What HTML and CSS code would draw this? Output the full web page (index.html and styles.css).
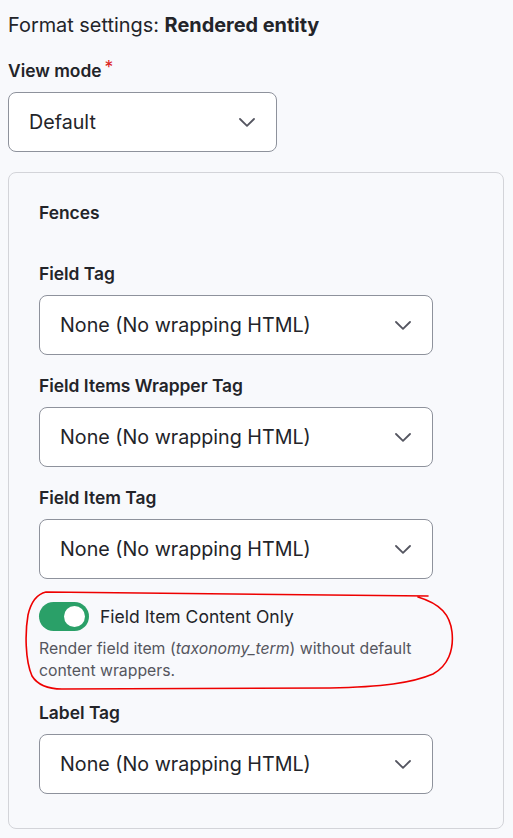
FILE: index.html
```html
<!DOCTYPE html>
<html lang="en">
<head>
<meta charset="utf-8">
<title>Format settings</title>
<link rel="stylesheet" href="styles.css">
</head>
<body>
<div class="page">
  <div class="title">Format settings: <strong>Rendered entity</strong></div>

  <div class="field field-top">
    <label class="label">View mode<span class="req">*</span></label>
    <div class="select select-short">
      <span>Default</span>
      <svg class="chev" width="16" height="9" viewBox="0 0 16 9"><path d="M1 1 L8 7.8 L15 1" fill="none" stroke="#545560" stroke-width="1.8" stroke-linecap="round" stroke-linejoin="round"/></svg>
    </div>
  </div>

  <div class="fieldset">
    <div class="legend">Fences</div>

    <div class="field">
      <label class="label">Field Tag</label>
      <div class="select">
        <span>None (No wrapping HTML)</span>
        <svg class="chev" width="16" height="9" viewBox="0 0 16 9"><path d="M1 1 L8 7.8 L15 1" fill="none" stroke="#545560" stroke-width="1.8" stroke-linecap="round" stroke-linejoin="round"/></svg>
      </div>
    </div>

    <div class="field">
      <label class="label">Field Items Wrapper Tag</label>
      <div class="select">
        <span>None (No wrapping HTML)</span>
        <svg class="chev" width="16" height="9" viewBox="0 0 16 9"><path d="M1 1 L8 7.8 L15 1" fill="none" stroke="#545560" stroke-width="1.8" stroke-linecap="round" stroke-linejoin="round"/></svg>
      </div>
    </div>

    <div class="field">
      <label class="label">Field Item Tag</label>
      <div class="select">
        <span>None (No wrapping HTML)</span>
        <svg class="chev" width="16" height="9" viewBox="0 0 16 9"><path d="M1 1 L8 7.8 L15 1" fill="none" stroke="#545560" stroke-width="1.8" stroke-linecap="round" stroke-linejoin="round"/></svg>
      </div>
    </div>

    <div class="toggle-field">
      <div class="toggle-row">
        <span class="toggle"><span class="knob"></span></span>
        <span class="toggle-label">Field Item Content Only</span>
      </div>
      <div class="desc">Render field item (<em>taxonomy_term</em>) without default content wrappers.</div>
    </div>

    <div class="field">
      <label class="label">Label Tag</label>
      <div class="select">
        <span>None (No wrapping HTML)</span>
        <svg class="chev" width="16" height="9" viewBox="0 0 16 9"><path d="M1 1 L8 7.8 L15 1" fill="none" stroke="#545560" stroke-width="1.8" stroke-linecap="round" stroke-linejoin="round"/></svg>
      </div>
    </div>
  </div>

  <svg class="annotation" width="513" height="838" viewBox="0 0 513 838">
    <path d="M428 596 L46 592 C37 594 31 602 28 615 C25 632 25 660 32 676 C37 684 46 689 62 689 L330 688 C382 687 412 683 433 674 C448 666 454 650 452 632 C450 615 441 604 418 597" fill="none" stroke="#ee0000" stroke-width="1.6" stroke-linecap="round" stroke-linejoin="round"/>
  </svg>
</div>
</body>
</html>
```

FILE: styles.css
```css
html, body {
  margin: 0;
  padding: 0;
  background: #f8f9fc;
}

body {
  font-family: Inter, "Noto Sans", sans-serif;
  color: #222330;
}

.page {
  position: relative;
  padding: 12px 9px 0 8px;
}

.title {
  font-size: 19.9px;
  line-height: 26px;
  color: #232429;
}

.title strong {
  font-weight: 700;
}

.field {
  display: flex;
  flex-direction: column;
  align-items: flex-start;
  margin-bottom: 19px;
}

.field-top {
  margin-top: 21px;
  margin-bottom: 20px;
}

.label {
  font-size: 17.4px;
  line-height: 24px;
  font-weight: 600;
  margin-bottom: 9px;
  color: #232429;
}

.req {
  color: #dc2323;
  font-weight: 400;
  margin-left: 3px;
  position: relative;
  top: -4px;
}

.select {
  box-sizing: border-box;
  width: 394px;
  height: 60px;
  border: 1px solid #8e929c;
  border-radius: 8px;
  background: #fff;
  display: flex;
  align-items: center;
  justify-content: space-between;
  padding: 0 21px 0 20px;
  font-size: 19.7px;
  color: #232429;
}

.select-short {
  width: 269px;
}

.chev {
  display: block;
}

.fieldset {
  box-sizing: border-box;
  width: 496px;
  border: 1px solid #d3d4d9;
  border-radius: 8px;
  padding: 28px 30px 15px 30px;
  background: #f8f9fc;
}

.legend {
  font-size: 17.4px;
  line-height: 24px;
  font-weight: 600;
  margin-bottom: 37px;
  color: #232429;
}

.toggle-field {
  margin-top: 23px;
  margin-bottom: 19px;
}

.toggle-row {
  display: flex;
  align-items: center;
  gap: 11px;
}

.toggle {
  box-sizing: border-box;
  width: 50px;
  height: 29px;
  border-radius: 15px;
  background: #2aa068;
  display: flex;
  align-items: center;
  justify-content: flex-end;
  padding-right: 4px;
}

.knob {
  width: 21px;
  height: 21px;
  border-radius: 50%;
  background: #fff;
}

.toggle-label {
  font-size: 17.5px;
  line-height: 24px;
  color: #232429;
}

.desc {
  margin-top: 7px;
  font-size: 15.8px;
  line-height: 22px;
  color: #55565e;
  width: 400px;
}

.desc em {
  font-style: italic;
}

.annotation {
  position: absolute;
  left: 0;
  top: 0;
  pointer-events: none;
}
```
